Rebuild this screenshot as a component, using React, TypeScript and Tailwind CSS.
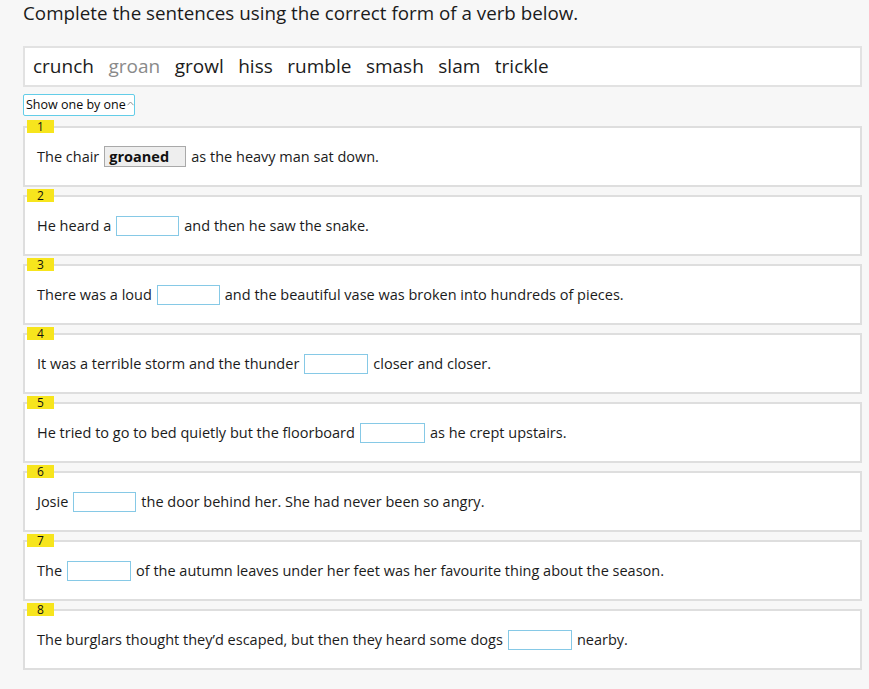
import React from "react";

type Part = string | { blank: true; w?: number } | { filled: string };

const items: Part[][] = [
  ["The chair", { filled: "groaned" }, "as the heavy man sat down."],
  ["He heard a", { blank: true }, "and then he saw the snake."],
  ["There was a loud", { blank: true }, "and the beautiful vase was broken into hundreds of pieces."],
  ["It was a terrible storm and the thunder", { blank: true, w: 64 }, "closer and closer."],
  ["He tried to go to bed quietly but the floorboard", { blank: true, w: 65 }, "as he crept upstairs."],
  ["Josie", { blank: true }, "the door behind her. She had never been so angry."],
  ["The", { blank: true, w: 64 }, "of the autumn leaves under her feet was her favourite thing about the season."],
  ["The burglars thought they\u2019d escaped, but then they heard some dogs", { blank: true, w: 64 }, "nearby."],
];

const words = ["crunch", "groan", "growl", "hiss", "rumble", "smash", "slam", "trickle"];

export default function App() {
  return (
    <div
      className="min-h-[689px] w-full bg-[#f7f7f7] pl-[23px] pr-[7px] text-[#1b1b1b]"
      style={{ fontFamily: '"Open Sans", "Noto Sans", sans-serif' }}
    >
      <h1 className="text-[18.8px] leading-[26px] font-normal">
        Complete the sentences using the correct form of a verb below.
      </h1>
      <div className="mt-[20px] flex h-[41px] items-center gap-[14.5px] border-2 border-[#e2e2e2] bg-white pl-[8px] text-[19px]">
        {words.map((w) => (
          <span key={w} className={w === "groan" ? "text-[#8a8a8a]" : "text-[#1b1b1b]"}>
            {w}
          </span>
        ))}
      </div>
      <div className="mt-[7px] flex">
        <button className="flex h-[22px] w-[112px] items-center gap-[1px] rounded-[2px] border border-[#63cde8] bg-white pl-[2px] text-[12.5px] leading-none text-[#0a0a0a]">
          <span>Show one by one</span>
          <svg width="7" height="5" viewBox="0 0 7 5" className="mb-[3px]">
            <path d="M0.5 4.2 L3.5 1 L6.5 4.2" fill="none" stroke="#888" strokeWidth="0.9" />
          </svg>
        </button>
      </div>
      <div className="mt-[4px] flex flex-col gap-[2px]">
        {items.map((parts, i) => (
          <fieldset key={i} className="border-2 border-[#dedede] bg-white">
            <legend className="ml-[2px] text-left">
              <span className="block h-[13px] w-[27px] bg-[#f7e51d] text-center text-[12px] leading-[13px] text-[#111]">
                {i + 1}
              </span>
            </legend>
            <div className="flex h-[52px] items-start pl-[12px] pt-[13px]">
              <div className="flex h-[21px] items-center gap-[5px] text-[14.5px] leading-[21px]">
                {parts.map((p, j) => {
                  if (typeof p === "string") return <span key={j}>{p}</span>;
                  if ("filled" in p)
                    return (
                      <span
                        key={j}
                        className="flex h-[21px] w-[82px] items-center border border-[#a9a9a9] bg-[#eeeeee] pl-[4px] font-bold text-[#111]"
                      >
                        {p.filled}
                      </span>
                    );
                  return (
                    <span
                      key={j}
                      className="block h-[20px] border border-[#86c9e6] bg-white"
                      style={{ width: p.w ?? 63 }}
                    />
                  );
                })}
              </div>
            </div>
          </fieldset>
        ))}
      </div>
    </div>
  );
}
